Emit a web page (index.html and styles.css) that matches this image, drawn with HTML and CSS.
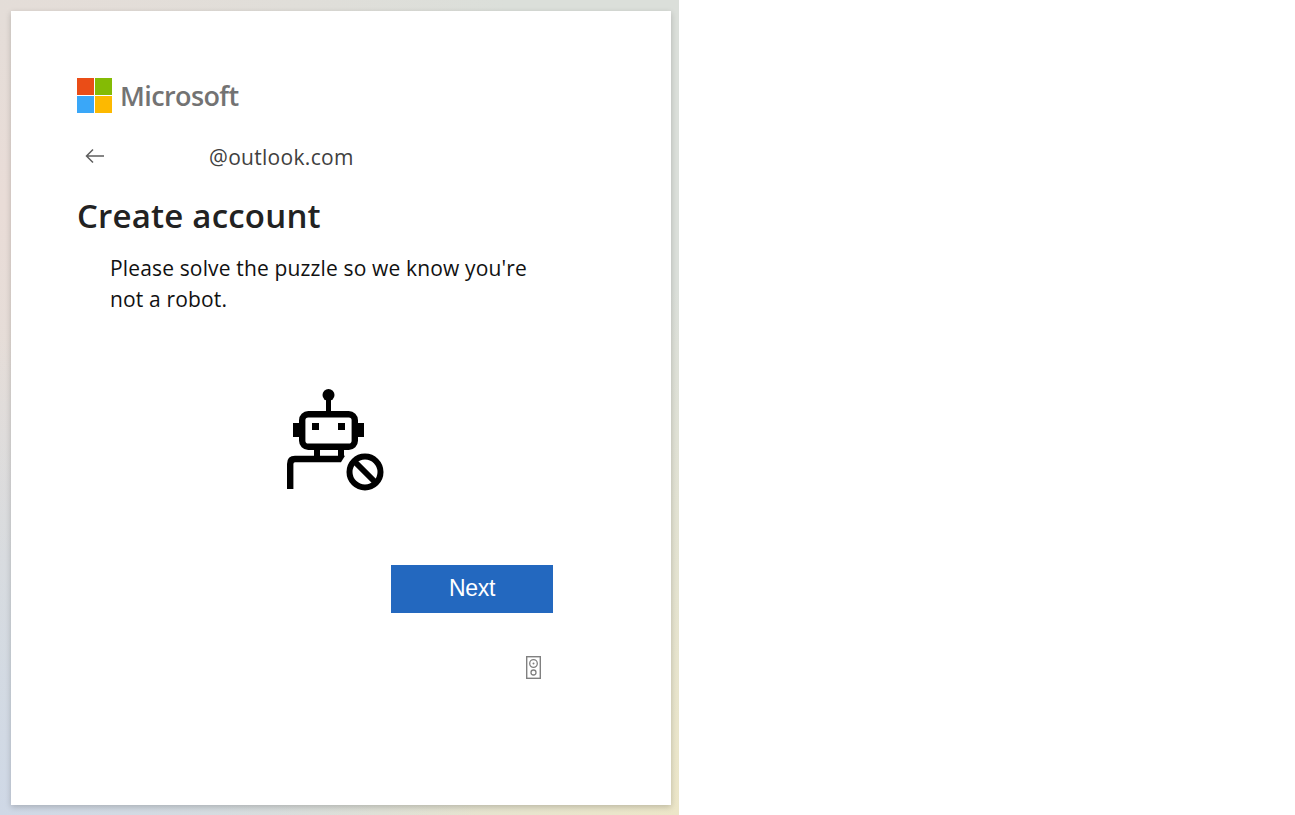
FILE: index.html
```html
<!DOCTYPE html>
<html lang="en">
<head>
<meta charset="utf-8">
<title>Create account</title>
<link rel="stylesheet" href="styles.css">
</head>
<body>
<main class="backdrop">
  <section class="card">
    <div class="logo">
      <svg class="logo-mark" width="35" height="35" viewBox="0 0 35 35" aria-hidden="true">
        <rect width="17" height="17" fill="#ea4d17"/>
        <rect x="18" width="17" height="17" fill="#84bb05"/>
        <rect y="18" width="17" height="17" fill="#3aa7f8"/>
        <rect x="18" y="18" width="17" height="17" fill="#fdb900"/>
      </svg>
      <span class="logo-text">Microsoft</span>
    </div>
    <div class="identity">
      <svg class="back" width="20" height="16" viewBox="0 0 20 16" aria-hidden="true">
        <path d="M8 1.500 1.500 8 8 14.500M1.500 8H19" fill="none" stroke="#5e5e5e" stroke-width="1.500"/>
      </svg>
      <span class="email">@outlook.com</span>
    </div>
    <h1 class="title">Create account</h1>
    <p class="message">Please solve the puzzle so we know you're<br>not a robot.</p>
    <div class="robot">
      <svg width="98" height="102" viewBox="0 0 98 102" aria-hidden="true">
        <circle cx="41.500" cy="6" r="6" fill="#000"/>
        <path d="M41.500 10V23" stroke="#000" stroke-width="5" fill="none"/>
        <rect x="15.200" y="25.200" width="52.600" height="32.600" rx="6" fill="none" stroke="#000" stroke-width="6.400"/>
        <rect x="6" y="34" width="6" height="14" fill="#000"/>
        <rect x="71" y="34" width="6" height="14" fill="#000"/>
        <rect x="25" y="34" width="7" height="7" fill="#000"/>
        <rect x="51" y="34" width="7" height="7" fill="#000"/>
        <path d="M30 61V68M54 61V68" stroke="#000" stroke-width="6" fill="none"/>
        <path d="M3.200 100V75Q3.200 70 8 70H50" stroke="#000" stroke-width="6.400" fill="none"/>
        <path d="M50 66.800H58L54 73.200H50Z" fill="#000"/>
        <circle cx="78" cy="83" r="15.500" fill="#fff" stroke="#000" stroke-width="6"/>
        <path d="M67 72 89 94" stroke="#000" stroke-width="6" fill="none"/>
      </svg>
    </div>
    <div class="actions">
      <button class="next" type="button">Next</button>
    </div>
    <div class="audio">
      <svg width="15" height="23" viewBox="0 0 15 23" aria-hidden="true">
        <rect x="0.700" y="0.700" width="13.600" height="21.600" fill="#fff" stroke="#808080" stroke-width="1.400"/>
        <circle cx="7.500" cy="7.500" r="3.800" fill="none" stroke="#808080" stroke-width="1.300"/>
        <circle cx="7.500" cy="7.500" r="1" fill="#808080"/>
        <circle cx="7.500" cy="16.500" r="2.500" fill="none" stroke="#808080" stroke-width="1.300"/>
      </svg>
    </div>
  </section>
</main>
</body>
</html>
```
FILE: styles.css
```css
* { box-sizing: border-box; }
html, body { margin: 0; background: #fff; }
body { width: 1295px; height: 815px; overflow: hidden; }
.backdrop {
  width: 679px;
  height: 815px;
  padding: 11px 8px 10px 11px;
  background:
    radial-gradient(circle at 0 100%, #cfd8e6 0, rgba(207,216,230,0) 45%),
    radial-gradient(circle at 100% 100%, #ece6c8 0, rgba(236,230,200,0) 50%),
    radial-gradient(circle at 0 25%, #e9dcd7 0, rgba(233,220,215,0) 60%),
    #dbdfda;
}
.card {
  width: 660px;
  height: 794px;
  padding: 67px 66px 0;
  background: #fff;
  box-shadow: 0 2px 6px rgba(0,0,0,.2);
}
.logo { display: flex; align-items: center; gap: 8px; height: 35px; }
.logo-mark { flex: none; }
.logo-text {
  font: 600 27px/35px "Open Sans", sans-serif;
  letter-spacing: -0.6px;
  color: #737373;
}
.identity { display: flex; align-items: center; height: 30px; margin-top: 28px; padding-left: 8px; }
.back { flex: none; }
.email {
  margin-left: 104px;
  padding-top: 2px;
  font: 400 21px/30px "Open Sans", sans-serif;
  letter-spacing: 0.3px;
  color: #404040;
}
.title {
  margin: 25px 0 0;
  font: 600 33px/40px "Open Sans", sans-serif;
  letter-spacing: 0.2px;
  color: #222;
}
.message {
  margin: 17px 0 0 33px;
  font: 400 21px/31px "Open Sans", sans-serif;
  letter-spacing: 0.15px;
  color: #111;
}
.robot { display: flex; margin: 74px 0 0 210px; height: 102px; }
.actions { display: flex; justify-content: flex-end; width: 476px; margin-top: 74px; }
.next {
  width: 162px;
  height: 48px;
  border: 0;
  padding: 0 0 2px;
  background: #2368bf;
  color: #fff;
  font: 400 23px/46px "Liberation Sans", Arial, sans-serif;
  letter-spacing: -0.3px;
}
.audio { display: flex; justify-content: flex-end; width: 464px; margin-top: 43px; }
```
